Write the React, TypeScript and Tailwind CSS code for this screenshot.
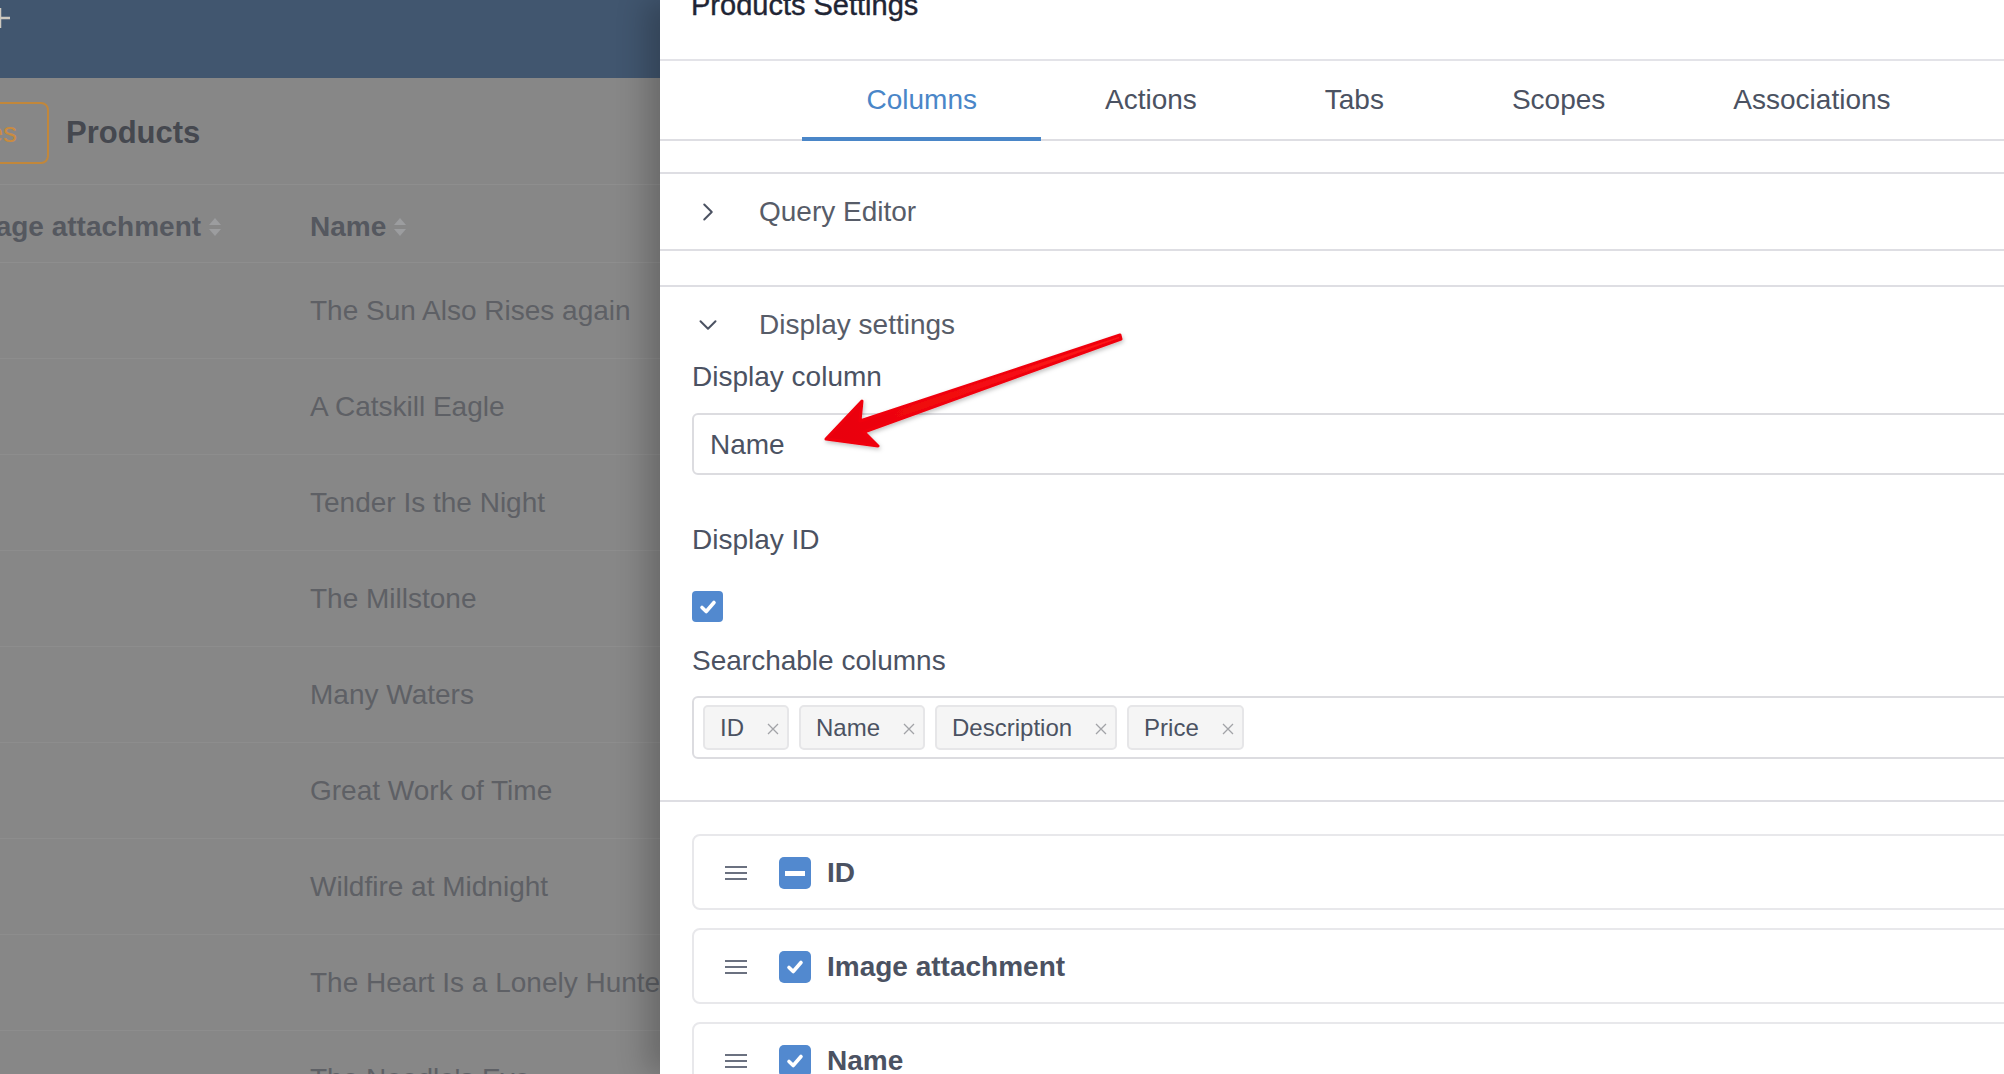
import { ChevronDown, ChevronRight } from "lucide-react";

const BOOKS = [
  "The Sun Also Rises again",
  "A Catskill Eagle",
  "Tender Is the Night",
  "The Millstone",
  "Many Waters",
  "Great Work of Time",
  "Wildfire at Midnight",
  "The Heart Is a Lonely Hunter",
  "The Needle's Eye",
];

const TABS = ["Columns", "Actions", "Tabs", "Scopes", "Associations"];

const SEARCHABLE = ["ID", "Name", "Description", "Price"];

const COLUMNS: { label: string; state: "checked" | "indeterminate" }[] = [
  { label: "ID", state: "indeterminate" },
  { label: "Image attachment", state: "checked" },
  { label: "Name", state: "checked" },
];

function SortIcon() {
  return (
    <svg width="14" height="22" viewBox="0 0 14 22" className="ml-[7px]">
      <path d="M7 2 L13 9 H1 Z" fill="#9c9d9f" />
      <path d="M7 20 L13 13 H1 Z" fill="#9c9d9f" />
    </svg>
  );
}

function CheckMark() {
  return (
    <svg width="22" height="22" viewBox="0 0 22 22">
      <path
        d="M5 11.5 L9.2 15.5 L17 6.5"
        fill="none"
        stroke="white"
        strokeWidth="3.6"
        strokeLinecap="round"
        strokeLinejoin="round"
      />
    </svg>
  );
}

function Checkbox({ state }: { state: "checked" | "indeterminate" }) {
  return (
    <div className="flex size-[32px] items-center justify-center rounded-[5px] bg-[#5289cf]">
      {state === "checked" ? (
        <CheckMark />
      ) : (
        <div className="h-[5px] w-[20px] bg-white" />
      )}
    </div>
  );
}

function DragHandle() {
  return (
    <svg width="24" height="14" viewBox="0 0 24 14">
      <path d="M1 1 H23 M1 7 H23 M1 13 H23" stroke="#6b7180" strokeWidth="1.8" />
    </svg>
  );
}

function BackgroundPage() {
  return (
    <div className="absolute inset-0 bg-[#878787]">
      <div className="flex h-[78px] items-start bg-[#41566f]">
        <svg width="20" height="20" viewBox="0 0 20 20" className="-ml-[10px] mt-[8px]">
          <path d="M10 0 V20 M0 10 H20" stroke="#cdc8bf" strokeWidth="2.5" />
        </svg>
      </div>

      <div className="flex h-[107px] items-center gap-[17px] border-b border-[#8e8e8e] pt-[4px]">
        <div className="-ml-[200px] flex w-[249px] justify-end">
          <div className="flex h-[62px] items-center rounded-lg border-2 border-[#c1873b] px-[30px] text-[28px] text-[#c98b3f]">
            Categories
          </div>
        </div>
        <h1 className="text-[31px] font-bold text-[#45484f]">Products</h1>
      </div>

      <div className="flex h-[78px] items-center border-b border-[#8e8e8e] pt-[6px] text-[28px] font-bold text-[#55585f]">
        <div className="-ml-[37px] flex w-[347px] items-center">
          Image attachment
          <SortIcon />
        </div>
        <div className="flex items-center">
          Name
          <SortIcon />
        </div>
      </div>

      {BOOKS.map((title) => (
        <div
          key={title}
          className="flex h-[96px] items-center border-b border-[#8d8d8d] pl-[310px] text-[28px] whitespace-nowrap text-[#5e6065]"
        >
          {title}
        </div>
      ))}
    </div>
  );
}

function SettingsPanel() {
  return (
    <div className="absolute left-[660px] top-0 h-full w-[1440px] bg-white shadow-[-14px_0_28px_rgba(0,0,0,0.22)]">
      <div className="flex h-[61px] items-start border-b-2 border-[#e3e3e8] pl-[31px]">
        <h2 className="-mt-[9px] text-[29px] leading-none text-[#1f2535] [-webkit-text-stroke:0.4px_#1f2535]">
          Products Settings
        </h2>
      </div>

      <div className="flex justify-center border-b-2 border-[#dedee3] pr-[3px]">
        {TABS.map((tab, i) => (
          <div
            key={tab}
            className={`relative flex h-[78px] items-center px-16 text-[28px] ${
              i === 0 ? "text-[#4a86c8]" : "text-[#4b5262]"
            }`}
          >
            {tab}
            {i === 0 && (
              <div className="absolute inset-x-0 -bottom-[2px] h-[4px] bg-[#4a86c8]" />
            )}
          </div>
        ))}
      </div>

      <div className="mt-[31px] flex h-[79px] items-center gap-[35px] border-y-2 border-[#dedee3] pl-8 text-[28px] text-[#575c68]">
        <div className="flex w-8 justify-center">
          <ChevronRight size={30} strokeWidth={1.6} color="#4b5262" />
        </div>
        Query Editor
      </div>

      <div className="mt-[34px] border-y-2 border-[#dedee3] px-8 pb-[41px] text-[28px] text-[#4b5262]">
        <div className="flex h-[75px] items-center gap-[35px] pt-[1px] text-[#575c68]">
          <div className="flex w-8 justify-center">
            <ChevronDown size={30} strokeWidth={1.6} color="#4b5262" />
          </div>
          Display settings
        </div>

        <div className="flex h-[30px] items-center">Display column</div>
        <div className="mt-[21px] flex h-[62px] items-center rounded-md border-2 border-[#dcdce0] px-4 pt-[1px]">
          Name
        </div>

        <div className="mt-[50px] flex h-[30px] items-center">Display ID</div>
        <div className="mt-[36px] flex size-[31px] items-center justify-center rounded-[4px] bg-[#5289cf]">
          <CheckMark />
        </div>

        <div className="mt-[24px] flex h-[30px] items-center">Searchable columns</div>
        <div className="mt-[20px] flex h-[63px] items-center gap-[10px] rounded-md border-2 border-[#dcdce0] pl-[9px]">
          {SEARCHABLE.map((col) => (
            <div
              key={col}
              className="flex h-[45px] items-center rounded-[5px] border-2 border-[#e6e6e8] bg-[#f5f5f5] pl-[15px] pr-[8px] text-[24px]"
            >
              {col}
              <svg width="12" height="12" viewBox="0 0 12 12" className="ml-[23px] mt-[3px]">
                <path d="M1 1 L11 11 M11 1 L1 11" stroke="#a2a3a7" strokeWidth="1.3" />
              </svg>
            </div>
          ))}
        </div>
      </div>

      <div className="mt-[32px] flex flex-col gap-[18px] px-8">
        {COLUMNS.map((col) => (
          <div
            key={col.label}
            className="flex h-[76px] shrink-0 items-center rounded-lg border-2 border-[#e8e8eb] pl-[30px] pt-[2px]"
          >
            <DragHandle />
            <div className="ml-[31px]">
              <Checkbox state={col.state} />
            </div>
            <span className="ml-[16px] text-[28px] font-bold text-[#4b5262]">{col.label}</span>
          </div>
        ))}
      </div>
    </div>
  );
}

function Annotation() {
  return (
    <svg
      className="pointer-events-none absolute inset-0"
      width="2004"
      height="1074"
      viewBox="0 0 2004 1074"
    >
      <defs>
        <linearGradient id="arrowFill" x1="0" y1="0" x2="1" y2="0">
          <stop offset="0" stopColor="#e8000a" />
          <stop offset="1" stopColor="#ff1a1a" />
        </linearGradient>
        <filter id="arrowShadow" x="-10%" y="-30%" width="120%" height="160%">
          <feDropShadow dx="1" dy="2" stdDeviation="2" floodColor="#000" floodOpacity="0.25" />
        </filter>
      </defs>
      <polygon
        points="826,439 862,401 860,421 1120,335 1121,339 864,432 878,446"
        fill="url(#arrowFill)"
        stroke="#f00510"
        strokeWidth="3"
        strokeLinejoin="round"
        filter="url(#arrowShadow)"
      />
    </svg>
  );
}

export default function App() {
  return (
    <div className="relative h-[1074px] w-[2004px] overflow-hidden font-['Liberation_Sans',Arial,sans-serif]">
      <BackgroundPage />
      <SettingsPanel />
      <Annotation />
    </div>
  );
}
